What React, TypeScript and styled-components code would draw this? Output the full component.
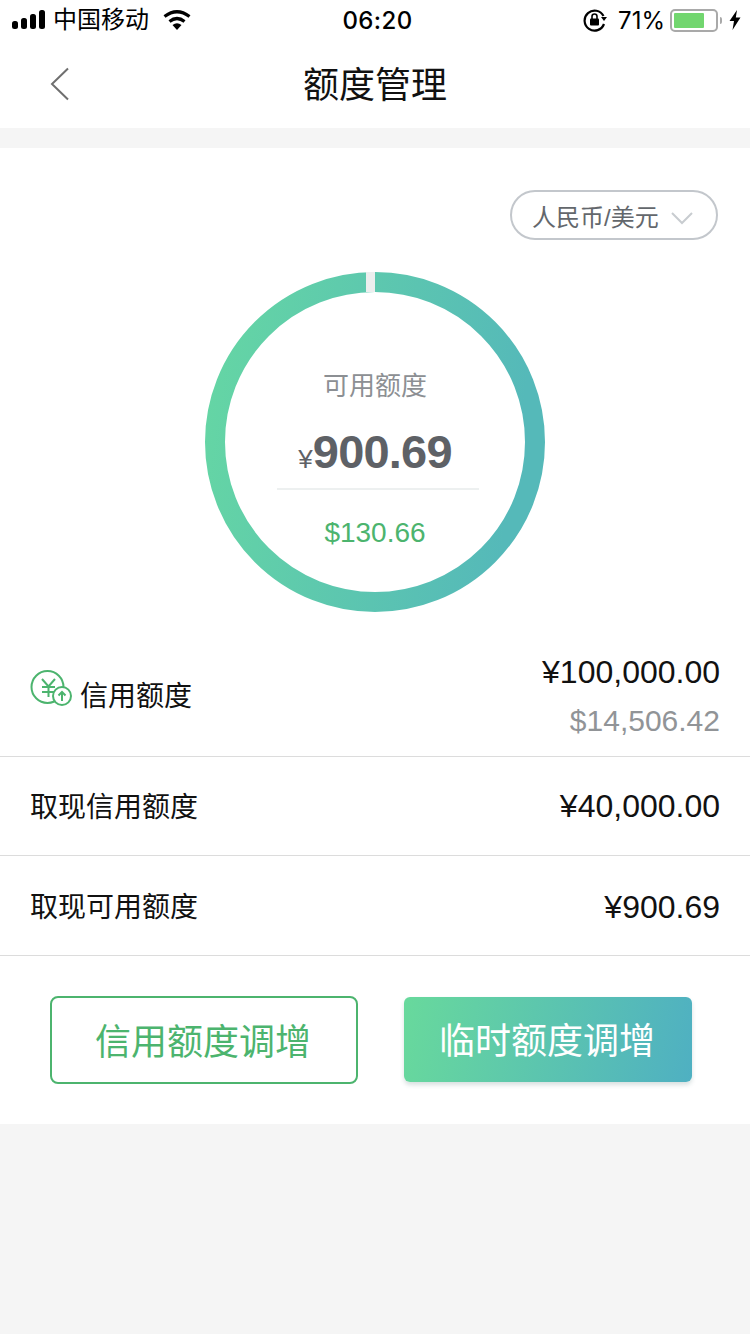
import React from 'react';
import styled, {createGlobalStyle} from 'styled-components';

const GlobalStyle = createGlobalStyle`
  html, body {
    margin: 0;
    padding: 0;
    background: #f5f5f5;
    font-family: "Liberation Sans", "Noto Sans CJK SC", sans-serif;
  }
`

const Page = styled.div`
  width: 750px;
  height: 1334px;
  overflow: hidden;
  background: #f5f5f5;
`

const Header = styled.div`
  background: #fff;
  height: 128px;
`

const StatusBar = styled.div`
  height: 40px;
  display: grid;
  grid-template-columns: 1fr auto 1fr;
  align-items: center;
  color: #000;
`

const StatusLeft = styled.div`
  display: flex;
  align-items: center;
  padding-left: 12px;
  font-size: 24px;
  line-height: 40px;
`

const Carrier = styled.span`
  margin-left: 7px;
`

const WifiIcon = styled.svg`
  margin-left: 13px;
`

const Clock = styled.div`
  font-family: Inter, sans-serif;
  font-size: 24px;
  font-weight: 500;
  letter-spacing: 0.4px;
  padding-left: 5px;
`

const StatusRight = styled.div`
  display: flex;
  align-items: center;
  justify-content: flex-end;
  padding-right: 9px;
`

const Percent = styled.span`
  font-family: Inter, sans-serif;
  font-size: 24px;
  margin-left: 11px;
  margin-right: 5px;
`

const Battery = styled.div`
  width: 48px;
  height: 23px;
  box-sizing: border-box;
  border: 2px solid #a9a9a9;
  border-radius: 5px;
  padding: 2px;
`

const BatteryFill = styled.div`
  height: 100%;
  background: #72d66f;
  border-radius: 1px;
`

const BatteryTip = styled.div`
  width: 2px;
  height: 7px;
  margin: 0 7px 0 2px;
  background: #a9a9a9;
  border-radius: 0 2px 2px 0;
`

const NavBar = styled.div`
  height: 88px;
  display: flex;
  align-items: center;
  justify-content: center;
  position: relative;
`

const BackIcon = styled.svg`
  position: absolute;
  left: 50px;
  top: 27px;
`

const Title = styled.div`
  font-size: 36px;
  color: #111;
  margin-top: -5px;
`

const Main = styled.div`
  margin-top: 20px;
  background: #fff;
  height: 976px;
  padding-top: 42px;
  box-sizing: border-box;
`

const SelectorRow = styled.div`
  display: flex;
  justify-content: flex-end;
  padding-right: 32px;
`

const Selector = styled.div`
  width: 208px;
  height: 50px;
  box-sizing: border-box;
  border: 2px solid #c3c7cc;
  border-radius: 25px;
  display: flex;
  align-items: center;
  padding-left: 20px;
  gap: 12px;
  font-size: 24px;
  color: #63676c;
`

const Chevron = styled.svg`
  margin-top: 5px;
`

const RingWrap = styled.div`
  position: relative;
  width: 340px;
  height: 340px;
  margin: 32px auto 0;
`

const RingCenter = styled.div`
  position: absolute;
  inset: 0;
  display: flex;
  flex-direction: column;
  align-items: center;
`

const RingLabel = styled.div`
  margin-top: 97px;
  font-size: 26px;
  line-height: 34px;
  color: #8c8f93;
`

const RingAmount = styled.div`
  margin-top: 19px;
  height: 60px;
  line-height: 60px;
  color: #5e6166;
  font-size: 47px;
  font-weight: 700;
  letter-spacing: -0.8px;
  white-space: nowrap;
`

const RingCurrency = styled.span`
  font-size: 26px;
  font-weight: 400;
  margin-right: 1px;
`

const RingDivider = styled.div`
  width: 202px;
  height: 2px;
  margin: 6px 0 0 5px;
  background: #edf0f0;
`

const RingUsd = styled.div`
  margin-top: 26px;
  font-size: 28px;
  line-height: 34px;
  color: #4cb46e;
`

const Rows = styled.div`
  margin-top: 28px;
`

const Row = styled.div<{$height: number}>`
  height: ${p => p.$height}px;
  box-sizing: border-box;
  border-bottom: 1px solid #dcdcdc;
  padding: 0 30px;
  display: flex;
  align-items: center;
  justify-content: space-between;
  font-size: 28px;
  color: #111;
`

const RowLabel = styled.div<{$shift: number}>`
  display: flex;
  align-items: center;
  margin-top: ${p => p.$shift}px;
`

const CreditIcon = styled.svg`
  margin-right: 7px;
  margin-top: -11px;
`

const RowValues = styled.div`
  display: flex;
  flex-direction: column;
  align-items: flex-end;
  margin-top: -5px;
`

const Amount = styled.div<{$shift?: number}>`
  font-size: 32px;
  line-height: 44px;
  color: #111;
  margin-top: ${p => p.$shift || 0}px;
`

const SubAmount = styled.div`
  font-size: 30px;
  line-height: 40px;
  margin-top: 7px;
  color: #919497;
`

const Buttons = styled.div`
  display: flex;
  padding: 40px 58px 0 50px;
  justify-content: space-between;
`

const OutlineButton = styled.div`
  width: 308px;
  height: 88px;
  box-sizing: border-box;
  border: 2px solid #4cb46e;
  border-radius: 8px;
  padding: 6px 2px 0 0;
  color: #4cb46e;
  font-size: 36px;
  line-height: 78px;
  text-align: center;
`

const GradientButton = styled.div`
  width: 288px;
  height: 85px;
  box-sizing: border-box;
  margin-top: 1px;
  padding: 5px 2px 0 0;
  border-radius: 6px;
  background: linear-gradient(100deg, #68d99c 0%, #4fb0c2 100%);
  box-shadow: 0 3px 4px rgba(80, 120, 120, 0.22);
  color: #fff;
  font-size: 36px;
  line-height: 80px;
  text-align: center;
`

const App = () => {
  return (
    <Page>
      <GlobalStyle/>
      <Header>
        <StatusBar>
          <StatusLeft>
            <svg width="34" height="20" viewBox="0 0 34 20">
              <rect x="0" y="11" width="6" height="8" rx="2.5" fill="#000"/>
              <rect x="9" y="8" width="6" height="11" rx="2.5" fill="#000"/>
              <rect x="18" y="4" width="6" height="15" rx="2.5" fill="#000"/>
              <rect x="27" y="0" width="6" height="19" rx="2.5" fill="#000"/>
            </svg>
            <Carrier>中国移动</Carrier>
            <WifiIcon width="30" height="22" viewBox="0 0 30 22">
              <path d="M15 21 L10.5 16 Q15 12.5 19.5 16 Z" fill="#000"/>
              <path d="M7.5 12.5 Q15 6.5 22.5 12.5" fill="none" stroke="#000" strokeWidth="3.2"/>
              <path d="M2.5 7.5 Q15 -2 27.5 7.5" fill="none" stroke="#000" strokeWidth="3.2"/>
            </WifiIcon>
          </StatusLeft>
          <Clock>06:20</Clock>
          <StatusRight>
            <svg width="24" height="24" viewBox="0 0 24 24">
              <path d="M20.5 8 A10 10 0 1 0 21 16" fill="none" stroke="#000" strokeWidth="2.2"/>
              <path d="M18 9 L24 9 L21 13 Z" fill="#000"/>
              <rect x="7" y="10.5" width="9" height="7" rx="1" fill="#000"/>
              <path d="M9 11 V8.5 a2.5 2.5 0 0 1 5 0 V11" fill="none" stroke="#000" strokeWidth="1.6"/>
            </svg>
            <Percent>71%</Percent>
            <Battery><BatteryFill style={{width: `${71 * 1.05}%`}}/></Battery>
            <BatteryTip/>
            <svg width="12" height="20" viewBox="0 0 12 20">
              <path d="M8 0 L0.5 11 L5 11 L3.5 20 L11.5 7.5 L6.8 7.5 Z" fill="#000"/>
            </svg>
          </StatusRight>
        </StatusBar>
        <NavBar>
          <BackIcon width="20" height="34" viewBox="0 0 20 34">
            <path d="M18 1.5 L2 17 L18 32.5" fill="none" stroke="#6f6f6f" strokeWidth="2"/>
          </BackIcon>
          <Title>额度管理</Title>
        </NavBar>
      </Header>
      <Main>
        <SelectorRow>
          <Selector>
            人民币/美元
            <Chevron width="22" height="14" viewBox="0 0 22 14">
              <path d="M1 2 L11 12 L21 2" fill="none" stroke="#c8ccd0" strokeWidth="2"/>
            </Chevron>
          </Selector>
        </SelectorRow>
        <RingWrap>
          <svg width="340" height="340" viewBox="0 0 340 340">
            <defs>
              <linearGradient id="ring" x1="0" y1="0" x2="1" y2="0.15">
                <stop offset="0" stopColor="#65d6a4"/>
                <stop offset="1" stopColor="#55b9b9"/>
              </linearGradient>
            </defs>
            <circle cx="170" cy="170" r="160" fill="none" stroke="url(#ring)" strokeWidth="20"/>
            <rect x="161" y="0" width="9" height="20" fill="#eceeee"/>
          </svg>
          <RingCenter>
            <RingLabel>可用额度</RingLabel>
            <RingAmount><RingCurrency>¥</RingCurrency>900.69</RingAmount>
            <RingDivider/>
            <RingUsd>$130.66</RingUsd>
          </RingCenter>
        </RingWrap>
        <Rows>
          <Row $height={117}>
            <RowLabel $shift={-9}>
              <CreditIcon width="43" height="36" viewBox="0 0 43 36">
                <circle cx="17.5" cy="17" r="16" fill="none" stroke="#4cb46e" strokeWidth="2"/>
                <path d="M12 9 L18.5 16.5 L25 9 M18.5 16.5 V27 M12 17 H25 M12 22 H25" fill="none" stroke="#4cb46e" strokeWidth="2"/>
                <circle cx="32" cy="26" r="9" fill="#fff" stroke="#4cb46e" strokeWidth="2"/>
                <path d="M32 31 V22 M28.5 25.5 L32 22 L35.5 25.5" fill="none" stroke="#4cb46e" strokeWidth="2"/>
              </CreditIcon>
              信用额度
            </RowLabel>
            <RowValues>
              <Amount>¥100,000.00</Amount>
              <SubAmount>$14,506.42</SubAmount>
            </RowValues>
          </Row>
          <Row $height={99}>
            <RowLabel $shift={-3}>取现信用额度</RowLabel>
            <Amount>¥40,000.00</Amount>
          </Row>
          <Row $height={100}>
            <RowLabel $shift={-2}>取现可用额度</RowLabel>
            <Amount $shift={2}>¥900.69</Amount>
          </Row>
        </Rows>
        <Buttons>
          <OutlineButton>信用额度调增</OutlineButton>
          <GradientButton>临时额度调增</GradientButton>
        </Buttons>
      </Main>
    </Page>
  );
};

export default App;
